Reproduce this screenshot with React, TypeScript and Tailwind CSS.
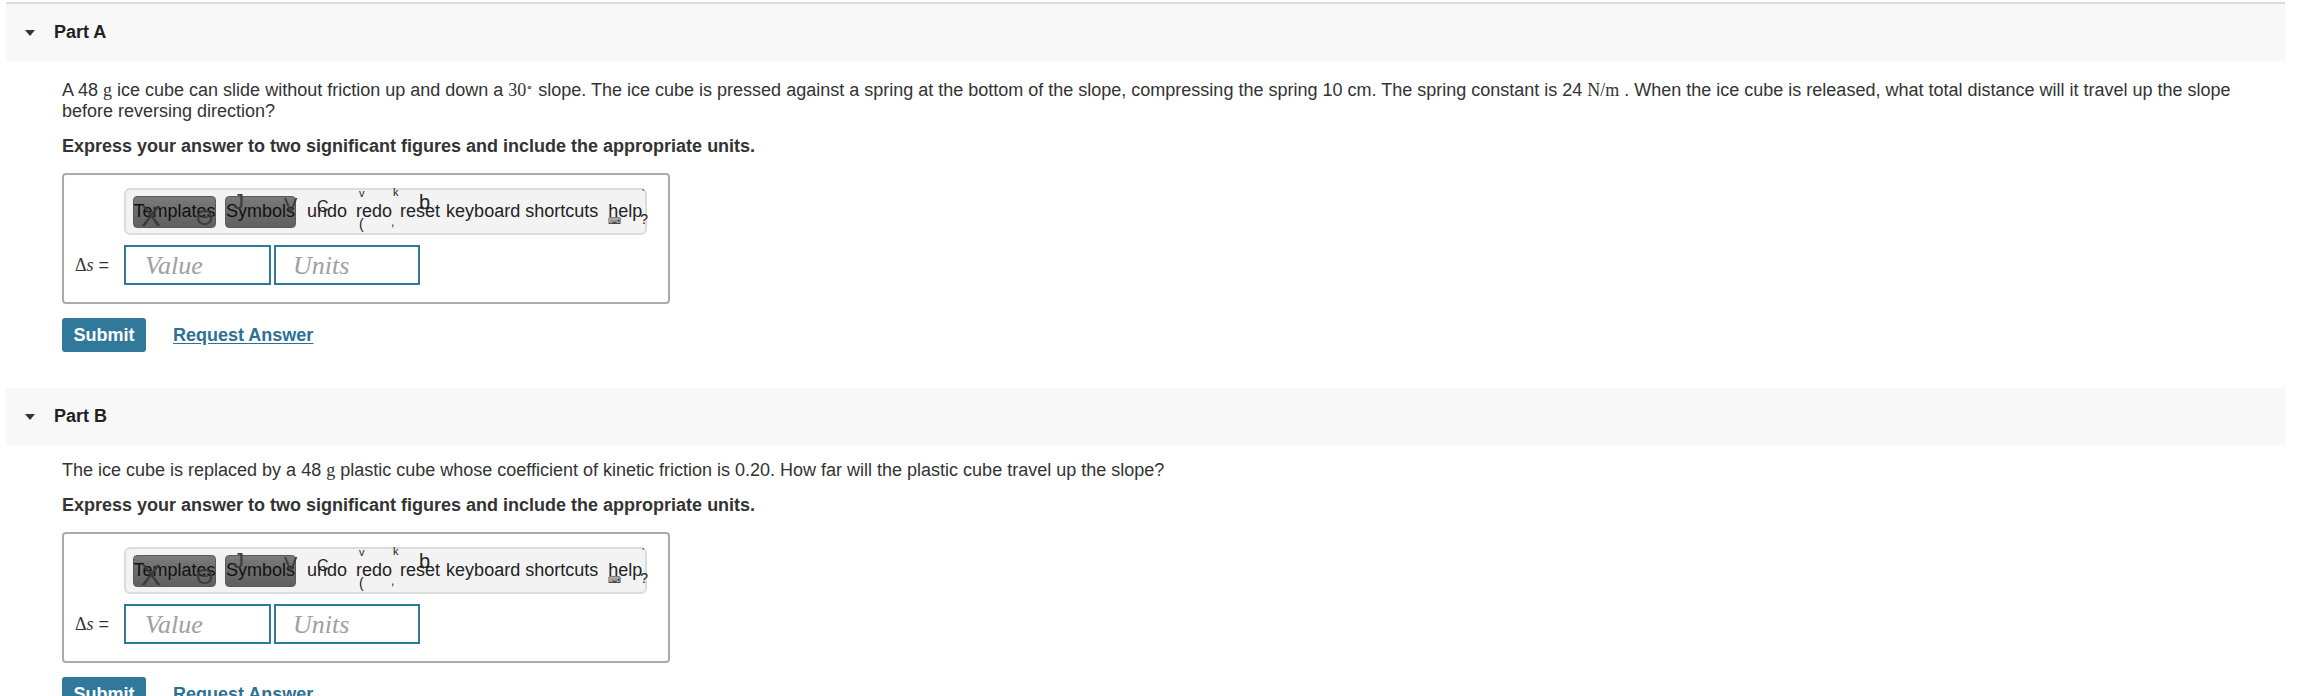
// Mastering-style problem parts: collapsible header, prompt, answer box
// with the math toolbar (icon font missing, so glyphs overlap the labels).
import type { ReactNode } from "react";

const serif = "font-['Liberation_Serif','Times_New_Roman',serif]";

function Caret() {
  return (
    <svg width="10" height="6" viewBox="0 0 10 6" className="block">
      <path d="M0 0 L10 0 L5 6 Z" fill="#333" />
    </svg>
  );
}

function Glyph({ className, children }: { className: string; children: ReactNode }) {
  return <span className={`pointer-events-none absolute leading-none ${className}`}>{children}</span>;
}

function Toolbar() {
  return (
    <div className="flex h-[47px] w-[523px] items-center rounded-[6px] border-2 border-[#dcdcdc] bg-[#f3f3f3] pl-[7px] text-[18px] text-[#222]">
      <div className="relative flex h-[32px] w-[83px] items-center justify-center overflow-visible rounded-[4px] border border-[#5a5a5a] bg-gradient-to-b from-[#7b7b7b] to-[#5f5f5f] text-[#111]">
        <span className="whitespace-nowrap">Templates</span>
        <Glyph className="left-[7px] top-[4px] text-[30px] text-[#3a3a3a]">X</Glyph>
        <Glyph className="left-[62px] top-[10px] text-[22px] text-[#3a3a3a]">Θ</Glyph>
      </div>
      <div className="relative ml-[9px] flex h-[32px] w-[71px] items-center justify-center rounded-[4px] border border-[#5a5a5a] bg-gradient-to-b from-[#7b7b7b] to-[#5f5f5f] text-[#111]">
        <span>Symbols</span>
        <Glyph className="left-[7px] top-[-6px] text-[22px] text-[#3a3a3a]">J</Glyph>
        <Glyph className="left-[58px] top-[-2px] text-[20px] text-[#3a3a3a]">V</Glyph>
      </div>
      <div className="relative ml-[11px]">
        <span>undo</span>
        <Glyph className="left-[10px] top-[1px] text-[16px] text-[#222]">C</Glyph>
      </div>
      <div className="relative ml-[9px]">
        <span>redo</span>
        <Glyph className="left-[3px] top-[-10px] text-[11px]">v</Glyph>
        <Glyph className="left-[37px] top-[-11px] text-[11px]">k</Glyph>
        <Glyph className="left-[3px] top-[19px] text-[14px]">(</Glyph>
        <Glyph className="left-[35px] top-[18px] text-[12px]">,</Glyph>
      </div>
      <div className="relative ml-[8px]">
        <span>reset</span>
        <Glyph className="left-[19px] top-[-6px] text-[20px]">b</Glyph>
      </div>
      <span className="ml-[6px]">keyboard shortcuts</span>
      <div className="relative ml-[10px]">
        <span>help</span>
        <Glyph className="left-[0px] top-[19px] text-[9px]">⌨</Glyph>
        <Glyph className="left-[32px] top-[14px] text-[14px]">?</Glyph>
        <Glyph className="left-[34px] top-[-10px] text-[9px]">'</Glyph>
      </div>
    </div>
  );
}

function AnswerBox() {
  return (
    <div className="mt-[16px] w-[608px] rounded-[4px] border-2 border-[#ababab] pb-[17px] pt-[13px]">
      <div className="ml-[60px]">
        <Toolbar />
      </div>
      <div className="mt-[10px] flex items-center pl-[11px]">
        <div className="flex w-[49px] items-center text-[18px] text-[#333]">
          <span className={serif}>Δ</span>
          <span className={`${serif} italic`}>s</span>
          <span className="ml-[5px]">=</span>
        </div>
        <div className={`flex h-[40px] w-[147px] items-center border-2 border-[#2f7a9b] pl-[19px] text-[26px] italic text-[#a0a0a0] ${serif}`}>
          Value
        </div>
        <div className={`ml-[3px] flex h-[40px] w-[146px] items-center border-2 border-[#2f7a9b] pl-[17px] text-[26px] italic text-[#a0a0a0] ${serif}`}>
          Units
        </div>
      </div>
    </div>
  );
}

function Part({ title, top, children }: { title: string; top: string; children: ReactNode }) {
  return (
    <section className="mb-[36px]">
      <div className="flex h-[57px] items-center bg-[#f8f8f8] pl-[19px]">
        <Caret />
        <h2 className="ml-[19px] text-[18px] font-bold text-[#222]">{title}</h2>
      </div>
      <div className={`pl-[56px] pr-[30px] ${top}`}>
        {children}
        <p className="mt-[14px] text-[18px] font-bold leading-[21px] text-[#333]">
          Express your answer to two significant figures and include the appropriate units.
        </p>
        <AnswerBox />
        <div className="mt-[14px] flex items-center">
          <button className="h-[34px] w-[84px] rounded-[3px] bg-[#31799a] text-[18px] font-bold text-white">
            Submit
          </button>
          <a href="#" className="ml-[27px] text-[18px] font-bold text-[#2c7195] underline underline-offset-2">
            Request Answer
          </a>
        </div>
      </div>
    </section>
  );
}

export default function App() {
  return (
    <div className="min-h-screen bg-white pt-[2px] font-['Liberation_Sans',Arial,sans-serif]">
      <div className="ml-[6px] w-[2279px] border-t-2 border-[#dcdcdc]">
        <Part title="Part A" top="pt-[19px]">
          <p className="w-[2205px] text-[18px] leading-[21px] text-[#333]">
            A 48 <span className={serif}>g</span> ice cube can slide without friction up and down a{" "}
            <span className={serif}>
              30<sup className="text-[11px]">∘</sup>
            </span>{" "}
            slope. The ice cube is pressed against a spring at the bottom of the slope, compressing the spring 10 cm.
            The spring constant is 24 <span className={serif}>N/m</span> . When the ice cube is released, what total
            distance will it travel up the slope before reversing direction?
          </p>
        </Part>
        <Part title="Part B" top="pt-[15px]">
          <p className="text-[18px] leading-[21px] text-[#333]">
            The ice cube is replaced by a 48 <span className={serif}>g</span> plastic cube whose coefficient of kinetic
            friction is 0.20. How far will the plastic cube travel up the slope?
          </p>
        </Part>
      </div>
    </div>
  );
}
